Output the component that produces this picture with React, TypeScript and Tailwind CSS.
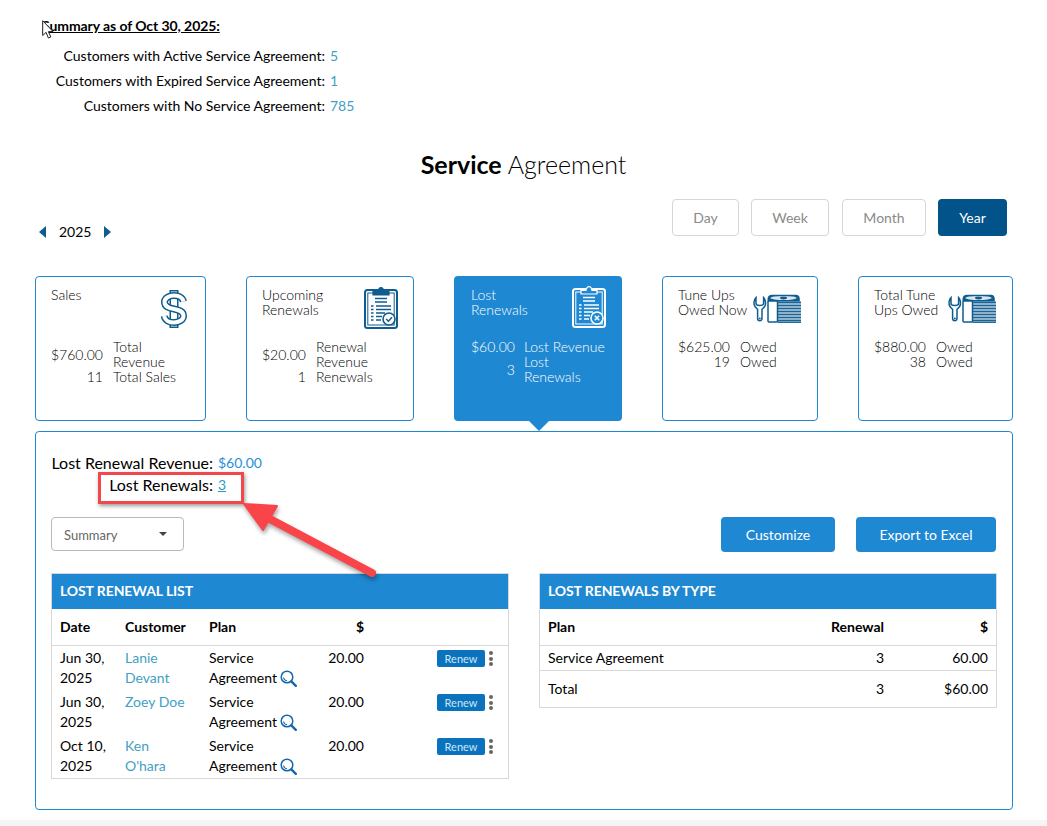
import React from 'react';

const BLUE = '#0f5c8f';
const S_PATH = 'M23.500 12.500C22.500 8.500 18.500 6.500 14 6.500S4.500 8.800 4.500 13C4.500 17.800 9 19 14 20s9.500 2.200 9.500 7c0 4.200-5 6.500-9.500 6.500S5 31.500 4.200 27';

const DollarIcon = () => (
  <svg width="28" height="40" viewBox="0 0 28 40" fill="none" className="shrink-0">
    <rect x="9.500" y="1" width="9" height="38" fill={BLUE} />
    <rect x="11" y="2.500" width="6" height="35" fill="white" />
    <path d={S_PATH} stroke={BLUE} strokeWidth="7" />
    <path d={S_PATH} stroke="white" strokeWidth="4" />
  </svg>
);

const ClipboardIcon = ({ color = BLUE, bg = 'white', cross = false }: { color?: string; bg?: string; cross?: boolean }) => (
  <svg width="34" height="43" viewBox="0 0 34 43" fill="none" className="shrink-0">
    <rect x="1" y="4" width="32" height="38" rx="2.500" stroke={color} strokeWidth="2" fill={bg} />
    <rect x="3.800" y="7" width="26.400" height="32" stroke={color} strokeWidth="1" fill={bg} />
    <path d="M9 9V5.500h5c.5-2.500 1.500-3.800 3-3.800s2.500 1.300 3 3.800h5V9Z" fill={cross ? bg : color} stroke={color} strokeWidth="1.200" />
    <g stroke={color} strokeWidth="1.700">
      <path d="M11 12.500h12M11 16h12M7 20h2.500M12 20h15M7 23.500h2.500M12 23.500h15M7 27h2.500M12 27h9M7 30.500h2.500M12 30.500h6M7 34h2.500M12 34h5" />
    </g>
    <circle cx="25" cy="33" r="6" fill={bg} stroke={color} strokeWidth="1.600" />
    {cross ? (
      <path d="M22.800 30.800l4.400 4.400M27.200 30.800l-4.400 4.400" stroke={color} strokeWidth="1.500" />
    ) : (
      <path d="M22.200 33l2.200 2.200 3.600-4" stroke={color} strokeWidth="1.500" />
    )}
  </svg>
);

const TuneIcon = () => (
  <svg width="50" height="30" viewBox="0 0 50 30" fill="none" className="shrink-0">
    <path d="M4 3.500C2 5.500 1.200 10 3 12.500c.8 1.200 1.800 2 2.600 2.800v9.200c0 3 4.400 3 4.400 0v-9.200c.8-.8 1.800-1.600 2.600-2.800C14.300 10 13.600 5.500 11.600 3.500v6c0 2.600-7.600 2.600-7.600 0Z" stroke={BLUE} strokeWidth="1.500" fill="white" />
    <circle cx="7.800" cy="24.500" r="1" fill={BLUE} />
    <rect x="24" y="7" width="25" height="21" fill="#8fb2cc" />
    <g stroke={BLUE} strokeWidth=".9">
      <path d="M24 8.500H49M24 11.500H49M24 14.500H49M24 17.500H49M24 20.500H49M24 23.500H49M24 26.500H49" />
    </g>
    <path d="M15.500 7.500V5C15.500 2 17.500.8 20 .8h24c2.500 0 3.800 1.600 3.800 4.200v2.500Z" fill={BLUE} />
    <ellipse cx="31.500" cy="4" rx="13" ry="2" fill="#d8e6f0" />
    <ellipse cx="31.500" cy="4" rx="3.500" ry="1.400" fill={BLUE} />
    <rect x="16" y="7" width="9.500" height="21" rx="1" fill="white" stroke={BLUE} strokeWidth="1.500" />
    <path d="M25.500 28.300H49" stroke={BLUE} strokeWidth="1.200" />
  </svg>
);

const SearchIcon = () => (
  <svg width="17" height="17" viewBox="0 0 17 17" fill="none" className="inline-block align-[-4px] ml-[3px]">
    <circle cx="7" cy="7" r="5.800" stroke="#1668ad" strokeWidth="1.500" />
    <path d="M3.500 7.500c.3 1.800 1.500 3 3.500 3.300" stroke="#1668ad" strokeWidth="1.100" />
    <path d="M11.300 11.300l4.500 4.500" stroke="#1668ad" strokeWidth="2.400" strokeLinecap="round" />
  </svg>
);

const Stat = ({ value, label, labelClass }: { value: string; label: string; labelClass: string }) => (
  <>
    <div className="text-right self-center">{value}</div>
    <div className={labelClass}>{label}</div>
  </>
);

const Renewals = [
  { date: 'Jun 30, 2025', customer: 'Lanie Devant' },
  { date: 'Jun 30, 2025', customer: 'Zoey Doe' },
  { date: 'Oct 10, 2025', customer: "Ken O'hara" },
];

export default function App() {
  return (
    <div className="relative w-[1047px] h-[826px] overflow-hidden bg-white text-black font-['Lato',sans-serif]">
      {/* Summary */}
      <div className="pt-[17px] pl-[42px] h-[147px]">
        <div className="font-bold underline text-[14px] leading-[18px] tracking-[-0.08px]">Summary as of Oct 30, 2025:</div>
        <div className="mt-[8px] -ml-[42px] grid grid-cols-[325px_auto] gap-x-[5px] auto-rows-[25px] items-center text-[14px] justify-start">
          <div className="text-right">Customers with Active Service Agreement:</div>
          <div className="text-[#3f9fc4]">5</div>
          <div className="text-right">Customers with Expired Service Agreement:</div>
          <div className="text-[#3f9fc4]">1</div>
          <div className="text-right">Customers with No Service Agreement:</div>
          <div className="text-[#3f9fc4]">785</div>
        </div>
      </div>

      <h1 className="text-center text-[25px] leading-[34px] font-light">
        <span className="font-bold">Service</span> Agreement
      </h1>

      {/* Period */}
      <div className="mt-[18px] h-[77px] flex justify-between pl-[39px] pr-[40px]">
        <div className="flex items-start h-[20px] mt-[23px] text-[14px] leading-[20px]">
          <svg className="mt-[4px]" width="7" height="12" viewBox="0 0 7 12"><path d="M7 0v12L0 6Z" fill={BLUE} /></svg>
          <span className="ml-[13px] mr-[13px]">2025</span>
          <svg className="mt-[4px]" width="7" height="12" viewBox="0 0 7 12"><path d="M0 0v12l7-6Z" fill={BLUE} /></svg>
        </div>
        <div className="flex text-[14px] h-[37px]">
          <div className="w-[67px] flex items-center justify-center rounded-[4px] border border-[#d6d6d6] text-[#8a8a8a]">Day</div>
          <div className="ml-[12px] w-[78px] flex items-center justify-center rounded-[4px] border border-[#d6d6d6] text-[#8a8a8a]">Week</div>
          <div className="ml-[13px] w-[84px] flex items-center justify-center rounded-[4px] border border-[#d6d6d6] text-[#8a8a8a]">Month</div>
          <div className="ml-[12px] w-[69px] flex items-center justify-center rounded-[4px] bg-[#02538a] text-white">Year</div>
        </div>
      </div>

      {/* Cards */}
      <div className="flex gap-[40px] pl-[35px] h-[145px] text-[14px] leading-[15px] font-light text-black">
        <div className="w-[171px] rounded-[4px] border border-[#1f88d2] pl-[15px] pr-[17px] pt-[10px]">
          <div className="flex justify-between h-[51px]">
            <div>Sales</div>
            <div className="mt-[2px]"><DollarIcon /></div>
          </div>
          <div className="mt-[1px] grid grid-cols-[auto_1fr] gap-x-[10px]">
            <Stat value="$760.00" label="Total Revenue" labelClass="w-[66px]" />
            <Stat value="11" label="Total Sales" labelClass="w-[76px]" />
          </div>
        </div>

        <div className="w-[168px] rounded-[4px] border border-[#1f88d2] pl-[15px] pr-[15px] pt-[10px]">
          <div className="flex justify-between h-[51px]">
            <div>Upcoming<br />Renewals</div>
            <div className="-mt-[1px]"><ClipboardIcon /></div>
          </div>
          <div className="mt-[1px] grid grid-cols-[auto_1fr] gap-x-[10px]">
            <Stat value="$20.00" label="Renewal Revenue" labelClass="w-[66px]" />
            <Stat value="1" label="Renewals" labelClass="w-[66px]" />
          </div>
        </div>

        <div className="relative w-[168px] rounded-[4px] bg-[#1f88d2] text-white pl-[17px] pr-[16px] pt-[11px]">
          <div className="flex justify-between h-[51px]">
            <div>Lost<br />Renewals</div>
            <div className="-mt-[2px]"><ClipboardIcon color="white" bg="#1f88d2" cross /></div>
          </div>
          <div className="mt-[1px] grid grid-cols-[auto_1fr] gap-x-[9px]">
            <Stat value="$60.00" label="Lost Revenue" labelClass="w-[81px] whitespace-nowrap" />
            <Stat value="3" label="Lost Renewals" labelClass="w-[81px]" />
          </div>
          <div className="absolute top-full left-[75px] border-x-[10px] border-t-[10px] border-x-transparent border-t-[#1f88d2]" />
        </div>

        <div className="w-[156px] rounded-[4px] border border-[#1f88d2] pl-[15px] pr-[15px] pt-[10px]">
          <div className="flex justify-between h-[51px]">
            <div className="whitespace-nowrap">Tune Ups<br />Owed Now</div>
            <div className="mt-[7px]"><TuneIcon /></div>
          </div>
          <div className="mt-[1px] grid grid-cols-[auto_1fr] gap-x-[10px]">
            <Stat value="$625.00" label="Owed" labelClass="" />
            <Stat value="19" label="Owed" labelClass="" />
          </div>
        </div>

        <div className="w-[155px] rounded-[4px] border border-[#1f88d2] pl-[15px] pr-[15px] pt-[10px]">
          <div className="flex justify-between h-[51px]">
            <div className="whitespace-nowrap">Total Tune<br />Ups Owed</div>
            <div className="mt-[7px]"><TuneIcon /></div>
          </div>
          <div className="mt-[1px] grid grid-cols-[auto_1fr] gap-x-[10px]">
            <Stat value="$880.00" label="Owed" labelClass="" />
            <Stat value="38" label="Owed" labelClass="" />
          </div>
        </div>
      </div>

      {/* Panel */}
      <div className="mt-[10px] ml-[35px] w-[978px] h-[379px] rounded-[4px] border border-[#1f88d2] pl-[15px] pr-[15px] pt-[20px]">
        <div className="grid grid-cols-[162px_auto] gap-x-[5px] justify-start items-center text-[16px] leading-[22px]">
          <div className="text-right whitespace-nowrap">Lost Renewal Revenue:</div>
          <div className="text-[14px] text-[#2a8fd8]">$60.00</div>
          <div className="text-right">Lost Renewals:</div>
          <div className="text-[14px] text-[#2f9dbf] underline">3</div>
        </div>

        <div className="mt-[21px] flex justify-between items-start pr-[1px]">
          <div className="w-[133px] h-[34px] rounded-[4px] border border-[#b9b9b9] flex items-center justify-between pl-[12px] pr-[16px] text-[13px] text-[#666]">
            <span className="pt-[3px]">Summary</span>
            <span className="border-x-[4.500px] border-t-[4.500px] border-x-transparent border-t-[#444]" />
          </div>
          <div className="flex gap-[21px] text-[14px] text-white">
            <div className="w-[114px] h-[35px] pb-[1px] rounded-[4px] bg-[#1f88d2] flex items-center justify-center">Customize</div>
            <div className="w-[140px] h-[35px] pb-[1px] rounded-[4px] bg-[#1f88d2] flex items-center justify-center">Export to Excel</div>
          </div>
        </div>

        <div className="mt-[21px] flex gap-[30px] items-start text-[14px]">
          {/* Lost renewal list */}
          <div className="w-[458px] h-[206px] border border-[#d8d8d8]">
            <div className="h-[35px] pb-[2px] bg-[#1f88d2] text-white font-bold flex items-center pl-[8px] tracking-[-0.1px]">LOST RENEWAL LIST</div>
            <table className="w-full table-fixed border-separate border-spacing-0 leading-[20px]">
              <thead>
                <tr className="h-[37px] font-bold">
                  <th className="w-[65px] pl-[8px] pb-[1px] text-left border-b border-[#d8d8d8]">Date</th>
                  <th className="w-[84px] pl-[8px] pb-[1px] text-left border-b border-[#d8d8d8]">Customer</th>
                  <th className="w-[100px] pl-[8px] pb-[1px] text-left border-b border-[#d8d8d8]">Plan</th>
                  <th className="w-[71px] pr-[8px] pb-[1px] text-right border-b border-[#d8d8d8]">$</th>
                  <th className="border-b border-[#d8d8d8]" />
                </tr>
              </thead>
              <tbody>
                {Renewals.map((r) => (
                  <tr key={r.customer} className="h-[44px] align-top">
                    <td className="pl-[8px] pt-[2px]">{r.date}</td>
                    <td className="pl-[8px] pr-[12px] pt-[2px] text-[#3f9fc4]">{r.customer}</td>
                    <td className="pl-[8px] pt-[2px] whitespace-nowrap">Service<br />Agreement<SearchIcon /></td>
                    <td className="pr-[8px] pt-[2px] text-right">20.00</td>
                    <td className="pt-[4px]">
                      <div className="flex justify-end items-center gap-[4px] pr-[15px]">
                        <div className="w-[48px] h-[17px] rounded-[2px] bg-[#0b72bd] text-[#cfe6f6] text-[11px] leading-[17px] text-center">Renew</div>
                        <div className="flex flex-col gap-[1.500px]">
                          <span className="w-[4px] h-[4px] rounded-full bg-[#666]" />
                          <span className="w-[4px] h-[4px] rounded-full bg-[#666]" />
                          <span className="w-[4px] h-[4px] rounded-full bg-[#666]" />
                        </div>
                      </div>
                    </td>
                  </tr>
                ))}
              </tbody>
            </table>
          </div>

          {/* By type */}
          <div className="w-[458px] border border-[#d8d8d8]">
            <div className="h-[35px] pb-[2px] bg-[#1f88d2] text-white font-bold flex items-center pl-[8px] tracking-[-0.1px]">LOST RENEWALS BY TYPE</div>
            <table className="w-full table-fixed border-separate border-spacing-0">
              <thead>
                <tr className="h-[37px] font-bold">
                  <th className="pl-[8px] pb-[1px] text-left border-b border-[#d8d8d8]">Plan</th>
                  <th className="w-[100px] pb-[1px] text-right border-b border-[#d8d8d8]">Renewal</th>
                  <th className="w-[112px] pr-[8px] pb-[1px] text-right border-b border-[#d8d8d8]">$</th>
                </tr>
              </thead>
              <tbody>
                <tr className="h-[25px]">
                  <td className="pl-[8px] pb-[2px] border-b border-[#d8d8d8]">Service Agreement</td>
                  <td className="pb-[2px] text-right border-b border-[#d8d8d8]">3</td>
                  <td className="pr-[8px] pb-[2px] text-right border-b border-[#d8d8d8]">60.00</td>
                </tr>
                <tr className="h-[36px]">
                  <td className="pl-[8px] pb-[2px]">Total</td>
                  <td className="pb-[2px] text-right">3</td>
                  <td className="pr-[8px] pb-[2px] text-right">$60.00</td>
                </tr>
              </tbody>
            </table>
          </div>
        </div>
      </div>

      <div className="absolute left-0 right-0 bottom-0 h-[6px] bg-[#f5f5f5]" />

      {/* Screenshot annotations */}
      <div className="absolute left-[98px] top-[472px] w-[146px] h-[32px] border-[3px] border-[#f0484c] shadow-[1px_2px_4px_rgba(0,0,0,0.4)]" />
      <svg className="absolute left-[235px] top-[495px]" width="155" height="95" viewBox="0 0 155 95" fill="none">
        <g style={{ filter: 'drop-shadow(1px 3px 2px rgba(0,0,0,0.35))' }}>
          <path d="M137 78 33 23" stroke="#f9444a" strokeWidth="8" strokeLinecap="round" />
          <path d="M9 9 42 11 28 35Z" fill="#f9444a" stroke="#f9444a" strokeWidth="2" strokeLinejoin="round" />
        </g>
      </svg>
      {/* Cursor */}
      <svg className="absolute left-[42px] top-[20px]" width="12" height="20" viewBox="0 0 12 20" fill="none">
        <path d="M.7.7v14.800l3.400-3.100 2.300 5.600 2.400-1-2.400-5.400h4.600Z" fill="white" stroke="#222" strokeWidth="1" />
      </svg>
    </div>
  );
}
